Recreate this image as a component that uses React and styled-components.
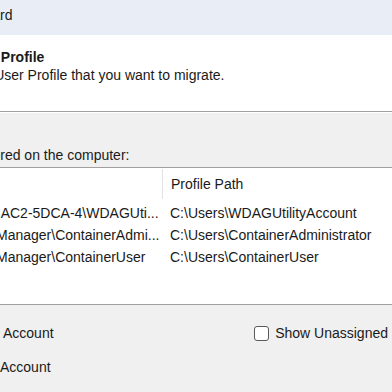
import React from 'react';
import styled, { createGlobalStyle } from 'styled-components';

const Global = createGlobalStyle`
  html, body {
    margin: 0;
    padding: 0;
    background: #f0f0f0;
    overflow: hidden;
  }
  body {
    font-family: "Liberation Sans", Arial, sans-serif;
    font-size: 14px;
    color: #1a1a1a;
  }
`;

const Window = styled.div`
  width: 392px;
  height: 392px;
  display: flex;
  flex-direction: column;
  overflow: hidden;
  white-space: nowrap;
`;

const TitleBar = styled.div`
  height: 35px;
  flex: none;
  background: #e9eef6;
  display: flex;
  align-items: center;
  padding-bottom: 6px;
  box-sizing: border-box;
`;

const Line = styled.div`
  margin-left: ${p => p.$shift || 0}px;
  font-weight: ${p => (p.$bold ? 700 : 400)};
  line-height: ${p => p.$lh || 18}px;
`;

const Header = styled.div`
  height: 76px;
  flex: none;
  background: #ffffff;
  padding-top: 13px;
  box-sizing: border-box;
  display: flex;
  flex-direction: column;
`;

const Panel = styled.div`
  flex: 1;
  border-top: 1px solid #a0a0a0;
  box-shadow: inset 0 1px 0 #ffffff;
  display: flex;
  flex-direction: column;
`;

const Caption = styled.div`
  height: 55px;
  flex: none;
  display: flex;
  align-items: flex-end;
  padding-bottom: 3px;
  box-sizing: border-box;
`;

const List = styled.div`
  height: 138px;
  flex: none;
  background: #ffffff;
  border-top: 1px solid #a0a0a0;
  border-bottom: 1px solid #a0a0a0;
  box-sizing: border-box;
  display: flex;
  flex-direction: column;
`;

const HeadRow = styled.div`
  height: 32px;
  display: grid;
  grid-template-columns: 162px 1fr;
  align-items: center;
`;

const HeadCell = styled.div`
  height: 30px;
  display: flex;
  align-items: center;
  padding-left: 8px;
  border-left: ${p => (p.$divider ? '1px solid #e3e3e3' : 'none')};
`;

const Row = styled.div`
  height: 22px;
  display: grid;
  grid-template-columns: 170px 1fr;
  align-items: center;
`;

const Cell = styled.div`
  margin-left: ${p => p.$shift || 0}px;
  overflow: visible;
`;

const Rows = styled.div`
  padding-top: 2px;
`;

const Footer = styled.div`
  flex: 1;
  display: flex;
  flex-direction: column;
  padding-top: 17px;
  gap: 12px;
`;

const FooterRow = styled.div`
  display: flex;
  align-items: center;
  justify-content: space-between;
  height: 22px;
`;

const CheckLabel = styled.label`
  display: flex;
  align-items: center;
  gap: 6px;
  margin-right: 4px;
`;

const Box = styled.span`
  width: 13px;
  height: 13px;
  border: 1px solid #5a5a5a;
  border-radius: 3px;
  background: #ffffff;
  display: inline-block;
`;

const rows = [
  ['MAC2-5DCA-4\\WDAGUti...', 'C:\\Users\\WDAGUtilityAccount', -11],
  ['Manager\\ContainerAdmi...', 'C:\\Users\\ContainerAdministrator', -4],
  ['Manager\\ContainerUser', 'C:\\Users\\ContainerUser', -4],
];

export default function App() {
  return (
    <>
      <Global />
      <Window>
        <TitleBar>
          <Line $shift={-31}>Wizard</Line>
        </TitleBar>
        <Header>
          <Line $bold $shift={-56}>Select a Profile</Line>
          <Line $shift={-72}>Select the User Profile that you want to migrate.</Line>
        </Header>
        <Panel>
          <Caption>
            <Line $shift={-69}>Profiles stored on the computer:</Line>
          </Caption>
          <List>
            <HeadRow>
              <HeadCell />
              <HeadCell $divider>Profile Path</HeadCell>
            </HeadRow>
            <Rows>
              {rows.map(([name, path, shift]) => (
                <Row key={path}>
                  <Cell $shift={shift}>{name}</Cell>
                  <Cell>{path}</Cell>
                </Row>
              ))}
            </Rows>
          </List>
          <Footer>
            <FooterRow>
              <Line $shift={3}>Account</Line>
              <CheckLabel>
                <Box />
                Show Unassigned
              </CheckLabel>
            </FooterRow>
            <FooterRow>
              <Line>Account</Line>
            </FooterRow>
          </Footer>
        </Panel>
      </Window>
    </>
  );
}
